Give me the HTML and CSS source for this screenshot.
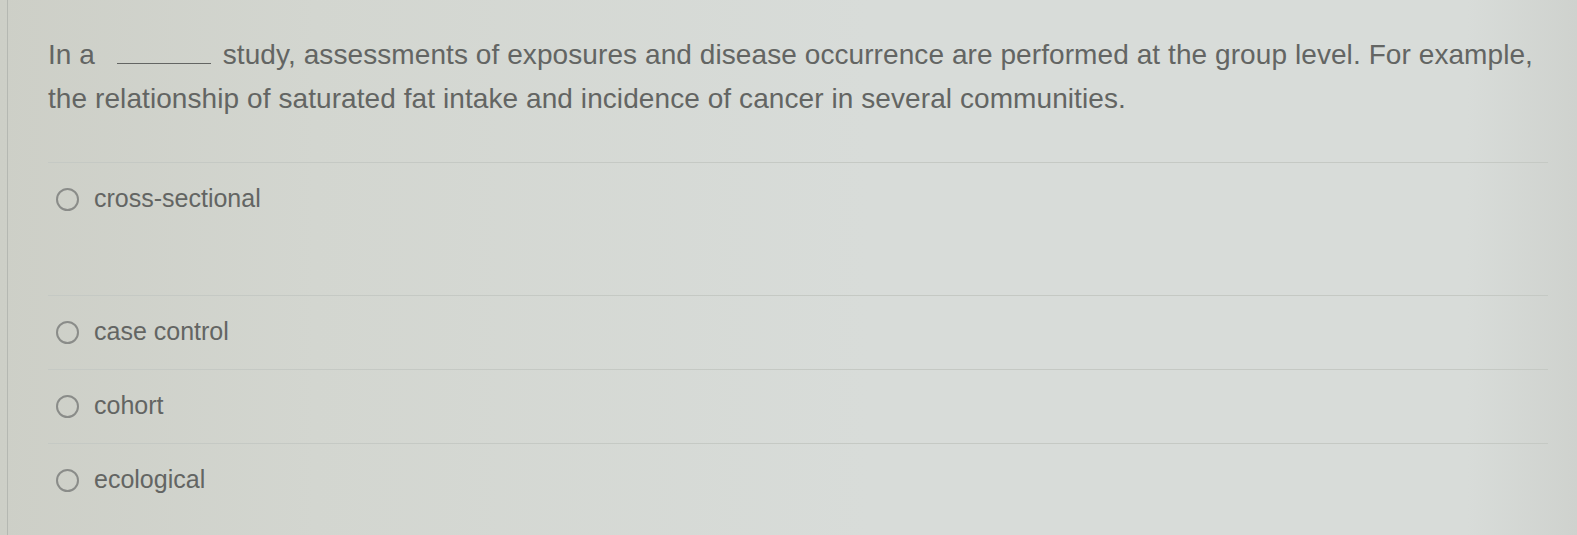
FILE: index.html
```html
<!DOCTYPE html>
<html>
<head>
<meta charset="utf-8">
<link rel="stylesheet" href="styles.css">
</head>
<body>
<div class="screen">
  <div class="panel">
    <p class="question">In a <span class="blank"></span> study, assessments of exposures and disease occurrence are performed at the group level. For example, the relationship of saturated fat intake and incidence of cancer in several communities.</p>
    <ul class="options">
      <li class="option option-first"><span class="radio"></span><span class="label">cross-sectional</span></li>
      <li class="option"><span class="radio"></span><span class="label">case control</span></li>
      <li class="option"><span class="radio"></span><span class="label">cohort</span></li>
      <li class="option option-last"><span class="radio"></span><span class="label">ecological</span></li>
    </ul>
  </div>
</div>
</body>
</html>
```
FILE: styles.css
```css
html, body {
  margin: 0;
  padding: 0;
}
body {
  width: 1577px;
  height: 535px;
  overflow: hidden;
  background: linear-gradient(90deg, #cdcfc7 0%, #d3d6d0 20%, #d8dcd9 55%, #d8dcd9 93%, #cfd2ce 100%);
  font-family: "Liberation Sans", Arial, sans-serif;
  color: #636563;
}
.screen {
  height: 535px;
  padding-left: 7px;
  box-sizing: border-box;
}
.panel {
  height: 535px;
  border-left: 1px solid #b5b8b2;
  padding-left: 40px;
  box-sizing: border-box;
}
.question {
  margin: 0;
  padding-top: 33px;
  width: 1515px;
  font-size: 28px;
  line-height: 44px;
  letter-spacing: 0.08px;
}
.blank {
  display: inline-block;
  width: 94px;
  border-bottom: 1.5px solid #636563;
  margin: 0 4px 0 14px;
  vertical-align: baseline;
}
.options {
  list-style: none;
  margin: 41px 0 0 0;
  padding: 0;
  width: 1500px;
}
.option {
  display: flex;
  align-items: flex-start;
  height: 74px;
  padding-top: 23px;
  box-sizing: border-box;
  border-top: 1px solid #c5c9c4;
}
.option-first {
  height: 133px;
}
.radio {
  width: 19px;
  height: 19px;
  border: 2px solid #8a8c89;
  border-radius: 50%;
  margin-left: 8px;
  margin-top: 2px;
  flex: none;
}
.label {
  margin-left: 15px;
  font-size: 25px;
  line-height: 24px;
}
```
